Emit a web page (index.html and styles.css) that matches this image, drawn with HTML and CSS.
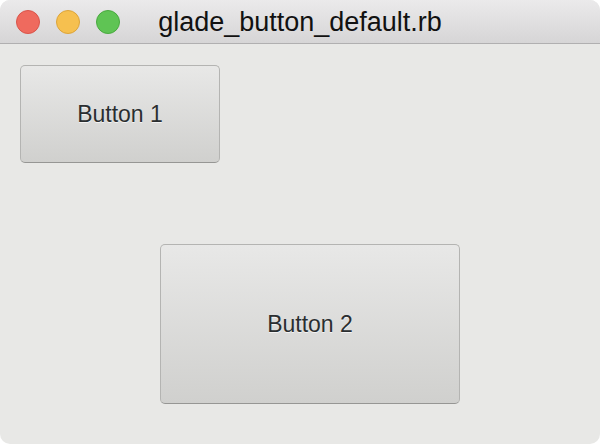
FILE: index.html
```html
<!DOCTYPE html>
<html lang="en">
<head>
    <meta charset="UTF-8">
    <meta name="viewport" content="width=device-width, initial-scale=1.0">
    <title>glade_button_default.rb</title>
    <link rel="stylesheet" href="styles.css">
</head>
<body>
    <div class="window">
        <!-- Title Bar -->
        <div class="titlebar">
            <div class="lights">
                <span class="light close"></span>
                <span class="light minimize"></span>
                <span class="light zoom"></span>
            </div>
            <div class="title">glade_button_default.rb</div>
        </div>

        <!-- Content -->
        <div class="content">
            <button class="btn btn-one">Button 1</button>
            <button class="btn btn-two">Button 2</button>
        </div>
    </div>
</body>
</html>
```

FILE: styles.css
```css
/* Window chrome */
:root {
    --window-bg: #e8e8e6;
    --text-color: #2a2e30;
    --border-color: #b4b4b2;
}

body {
    margin: 0;
    padding: 0;
    background-color: #ffffff;
    font-family: 'Liberation Sans', Arial, sans-serif;
}

.window {
    width: 600px;
    height: 444px;
    background-color: var(--window-bg);
    border-radius: 10px;
    overflow: hidden;
    display: flex;
    flex-direction: column;
}

.titlebar {
    height: 43px;
    flex-shrink: 0;
    background: linear-gradient(to bottom, #ebeaeb, #d6d5d6);
    border-bottom: 1px solid #b0afb0;
    position: relative;
    display: flex;
    align-items: center;
    justify-content: center;
}

.lights {
    position: absolute;
    left: 16px;
    top: 10px;
    display: flex;
    gap: 16px;
}

.light {
    width: 24px;
    height: 24px;
    border-radius: 50%;
    box-sizing: border-box;
}

.close {
    background-color: #ef6a5e;
    border: 1px solid #d9544a;
}

.minimize {
    background-color: #f6c04f;
    border: 1px solid #dca43a;
}

.zoom {
    background-color: #5fc454;
    border: 1px solid #49a93f;
}

.title {
    font-size: 27px;
    color: #111111;
    margin-top: 1px;
}

.content {
    flex: 1;
    display: flex;
    flex-direction: column;
    align-items: flex-start;
    padding: 21px 20px 0;
}

.btn {
    font-family: 'Liberation Sans', Arial, sans-serif;
    font-size: 23px;
    color: var(--text-color);
    background: linear-gradient(to bottom, #e8e8e7, #d0d0ce);
    border: 1px solid var(--border-color);
    border-bottom-color: #969694;
    border-radius: 5px;
    box-sizing: border-box;
    padding: 0;
    text-shadow: 0 1px 0 rgba(255, 255, 255, 0.7);
}

.btn-one {
    width: 200px;
    height: 98px;
}

.btn-two {
    width: 300px;
    height: 160px;
    margin-top: 81px;
    margin-left: 140px;
}
```
